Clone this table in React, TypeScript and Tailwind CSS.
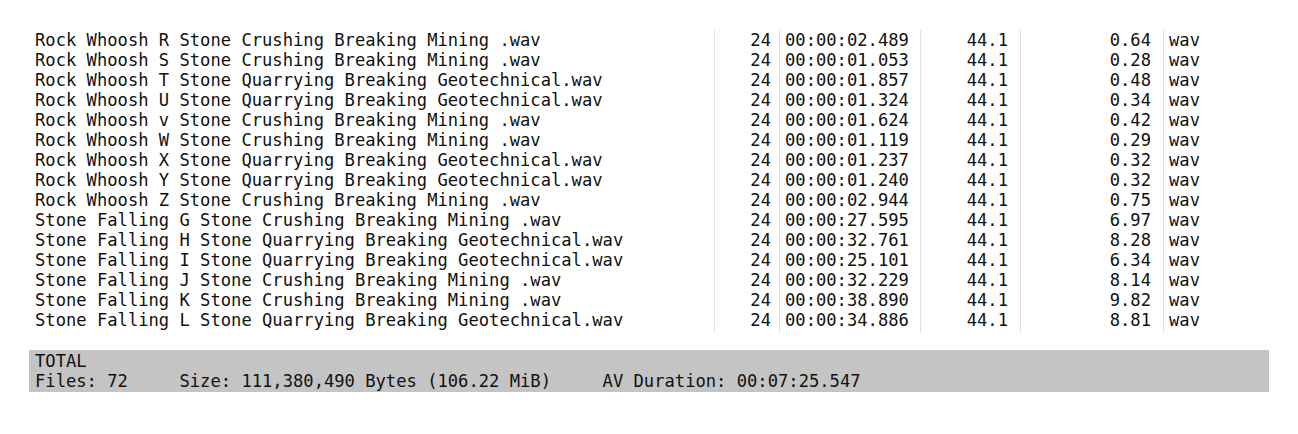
const rows = [
  ['Rock Whoosh R Stone Crushing Breaking Mining .wav', '24', '00:00:02.489', '44.1', '0.64', 'wav'],
  ['Rock Whoosh S Stone Crushing Breaking Mining .wav', '24', '00:00:01.053', '44.1', '0.28', 'wav'],
  ['Rock Whoosh T Stone Quarrying Breaking Geotechnical.wav', '24', '00:00:01.857', '44.1', '0.48', 'wav'],
  ['Rock Whoosh U Stone Quarrying Breaking Geotechnical.wav', '24', '00:00:01.324', '44.1', '0.34', 'wav'],
  ['Rock Whoosh v Stone Crushing Breaking Mining .wav', '24', '00:00:01.624', '44.1', '0.42', 'wav'],
  ['Rock Whoosh W Stone Crushing Breaking Mining .wav', '24', '00:00:01.119', '44.1', '0.29', 'wav'],
  ['Rock Whoosh X Stone Quarrying Breaking Geotechnical.wav', '24', '00:00:01.237', '44.1', '0.32', 'wav'],
  ['Rock Whoosh Y Stone Quarrying Breaking Geotechnical.wav', '24', '00:00:01.240', '44.1', '0.32', 'wav'],
  ['Rock Whoosh Z Stone Crushing Breaking Mining .wav', '24', '00:00:02.944', '44.1', '0.75', 'wav'],
  ['Stone Falling G Stone Crushing Breaking Mining .wav', '24', '00:00:27.595', '44.1', '6.97', 'wav'],
  ['Stone Falling H Stone Quarrying Breaking Geotechnical.wav', '24', '00:00:32.761', '44.1', '8.28', 'wav'],
  ['Stone Falling I Stone Quarrying Breaking Geotechnical.wav', '24', '00:00:25.101', '44.1', '6.34', 'wav'],
  ['Stone Falling J Stone Crushing Breaking Mining .wav', '24', '00:00:32.229', '44.1', '8.14', 'wav'],
  ['Stone Falling K Stone Crushing Breaking Mining .wav', '24', '00:00:38.890', '44.1', '9.82', 'wav'],
  ['Stone Falling L Stone Quarrying Breaking Geotechnical.wav', '24', '00:00:34.886', '44.1', '8.81', 'wav'],
];

export default function App() {
  return (
    <div
      className="w-[1298px] h-[434px] bg-white text-[#111] pt-[30px] pl-[29px] text-[17.15px] leading-[20px] whitespace-pre"
      style={{ fontFamily: '"DejaVu Sans Mono", "Liberation Mono", monospace' }}
    >
      {/* file list */}
      <div className="w-[1241px] flex">
        <div className="w-[685px] pl-[6px] pb-[3px]">
          {rows.map((r, i) => (
            <div key={i}>{r[0]}</div>
          ))}
        </div>
        <div className="w-[65px] border-l border-[#e2e2e2] text-right pr-[8px] pb-[3px]">
          {rows.map((r, i) => (
            <div key={i}>{r[1]}</div>
          ))}
        </div>
        <div className="w-[141px] border-l border-[#e2e2e2] pl-[5px] pb-[3px]">
          {rows.map((r, i) => (
            <div key={i}>{r[2]}</div>
          ))}
        </div>
        <div className="w-[100px] border-l border-[#e2e2e2] text-right pr-[12px] pb-[3px]">
          {rows.map((r, i) => (
            <div key={i}>{r[3]}</div>
          ))}
        </div>
        <div className="w-[143px] border-l border-[#e2e2e2] text-right pr-[12px] pb-[3px]">
          {rows.map((r, i) => (
            <div key={i}>{r[4]}</div>
          ))}
        </div>
        <div className="flex-1 border-l border-[#e2e2e2] pl-[5px] pb-[3px]">
          {rows.map((r, i) => (
            <div key={i}>{r[5]}</div>
          ))}
        </div>
      </div>

      {/* totals */}
      <div className="mt-[17px] w-[1240px] bg-[#c4c4c4] pl-[6px] py-px">
        <div>TOTAL</div>
        <div>{'Files: 72     Size: 111,380,490 Bytes (106.22 MiB)     AV Duration: 00:07:25.547'}</div>
      </div>
    </div>
  );
}
